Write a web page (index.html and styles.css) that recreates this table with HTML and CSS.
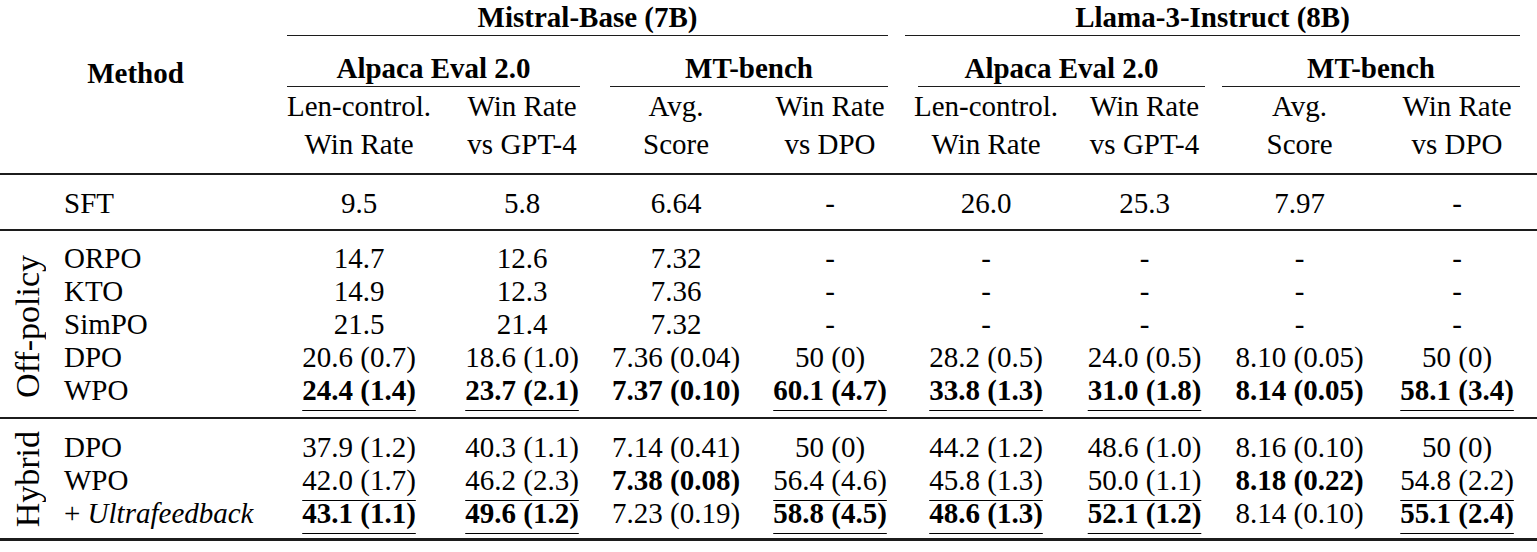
FILE: index.html
```html
<!DOCTYPE html>
<html lang="en">
<head>
<meta charset="utf-8">
<title>Results table</title>
<link rel="stylesheet" href="styles.css">
</head>
<body>
<table class="results">
  <colgroup>
    <col class="w-group">
    <col class="w-method">
    <col class="w-len">
    <col class="w-gpt">
    <col class="w-avg">
    <col class="w-dpo">
    <col class="w-len2">
    <col class="w-gpt2">
    <col class="w-avg2">
    <col class="w-dpo2">
  </colgroup>
  <thead>
    <tr class="row-model">
      <th class="method-head" colspan="2" rowspan="3"><div class="method-title">Method</div></th>
      <th colspan="4"><div class="span-rule rule-mistral">Mistral-Base (7B)</div></th>
      <th colspan="4"><div class="span-rule rule-llama">Llama-3-Instruct (8B)</div></th>
    </tr>
    <tr class="row-bench">
      <th colspan="2"><div class="span-rule bench rule-alpaca1">Alpaca Eval 2.0</div></th>
      <th colspan="2"><div class="span-rule bench rule-mt1">MT-bench</div></th>
      <th colspan="2"><div class="span-rule bench rule-alpaca2">Alpaca Eval 2.0</div></th>
      <th colspan="2"><div class="span-rule bench rule-mt2">MT-bench</div></th>
    </tr>
    <tr class="row-metric">
      <th class="metric">Len-control.<br>Win Rate</th>
      <th class="metric">Win Rate<br>vs GPT-4</th>
      <th class="metric">Avg.<br>Score</th>
      <th class="metric">Win Rate<br>vs DPO</th>
      <th class="metric">Len-control.<br>Win Rate</th>
      <th class="metric">Win Rate<br>vs GPT-4</th>
      <th class="metric">Avg.<br>Score</th>
      <th class="metric">Win Rate<br>vs DPO</th>
    </tr>
  </thead>
  <tbody class="block block-sft">
    <tr>
      <td class="group-label"></td>
      <td class="method">SFT</td>
      <td>9.5</td><td>5.8</td><td>6.64</td><td>-</td>
      <td>26.0</td><td>25.3</td><td>7.97</td><td>-</td>
    </tr>
  </tbody>
  <tbody class="block block-off">
    <tr>
      <td class="group-label" rowspan="5"><span class="rot">Off-policy</span></td>
      <td class="method">ORPO</td>
      <td>14.7</td><td>12.6</td><td>7.32</td><td>-</td>
      <td>-</td><td>-</td><td>-</td><td>-</td>
    </tr>
    <tr>
      <td class="method">KTO</td>
      <td>14.9</td><td>12.3</td><td>7.36</td><td>-</td>
      <td>-</td><td>-</td><td>-</td><td>-</td>
    </tr>
    <tr>
      <td class="method">SimPO</td>
      <td>21.5</td><td>21.4</td><td>7.32</td><td>-</td>
      <td>-</td><td>-</td><td>-</td><td>-</td>
    </tr>
    <tr>
      <td class="method">DPO</td>
      <td>20.6 (0.7)</td><td>18.6 (1.0)</td><td>7.36 (0.04)</td><td>50 (0)</td>
      <td>28.2 (0.5)</td><td>24.0 (0.5)</td><td>8.10 (0.05)</td><td>50 (0)</td>
    </tr>
    <tr>
      <td class="method">WPO</td>
      <td><span class="best ul">24.4 (1.4)</span></td>
      <td><span class="best ul">23.7 (2.1)</span></td>
      <td><span class="best">7.37 (0.10)</span></td>
      <td><span class="best ul">60.1 (4.7)</span></td>
      <td><span class="best ul">33.8 (1.3)</span></td>
      <td><span class="best ul">31.0 (1.8)</span></td>
      <td><span class="best">8.14 (0.05)</span></td>
      <td><span class="best ul">58.1 (3.4)</span></td>
    </tr>
  </tbody>
  <tbody class="block block-hybrid">
    <tr>
      <td class="group-label" rowspan="3"><span class="rot">Hybrid</span></td>
      <td class="method">DPO</td>
      <td>37.9 (1.2)</td><td>40.3 (1.1)</td><td>7.14 (0.41)</td><td>50 (0)</td>
      <td>44.2 (1.2)</td><td>48.6 (1.0)</td><td>8.16 (0.10)</td><td>50 (0)</td>
    </tr>
    <tr>
      <td class="method">WPO</td>
      <td><span class="ul">42.0 (1.7)</span></td>
      <td><span class="ul">46.2 (2.3)</span></td>
      <td><span class="best">7.38 (0.08)</span></td>
      <td><span class="ul">56.4 (4.6)</span></td>
      <td><span class="ul">45.8 (1.3)</span></td>
      <td><span class="ul">50.0 (1.1)</span></td>
      <td><span class="best">8.18 (0.22)</span></td>
      <td><span class="ul">54.8 (2.2)</span></td>
    </tr>
    <tr>
      <td class="method">+ <em>Ultrafeedback</em></td>
      <td><span class="best ul">43.1 (1.1)</span></td>
      <td><span class="best ul">49.6 (1.2)</span></td>
      <td>7.23 (0.19)</td>
      <td><span class="best ul">58.8 (4.5)</span></td>
      <td><span class="best ul">48.6 (1.3)</span></td>
      <td><span class="best ul">52.1 (1.2)</span></td>
      <td>8.14 (0.10)</td>
      <td><span class="best ul">55.1 (2.4)</span></td>
    </tr>
  </tbody>
</table>
</body>
</html>
```

FILE: styles.css
```css
html, body {
  margin: 0;
  padding: 0;
  background: #ffffff;
}

body {
  font-family: "Liberation Serif", "Times New Roman", Times, serif;
  font-size: 29px;
  color: #000000;
}

.results {
  border-collapse: separate;
  border-spacing: 0;
  table-layout: fixed;
  width: 1537px;
  line-height: 33px;
}

.w-group { width: 48px; }
.w-method { width: 223px; }
.w-len { width: 176px; }
.w-gpt { width: 150px; }
.w-avg { width: 158px; }
.w-dpo { width: 150px; }
.w-len2 { width: 162px; }
.w-gpt2 { width: 155px; }
.w-avg2 { width: 155px; }
.w-dpo2 { width: 160px; }

.results th,
.results td {
  padding: 0;
  text-align: center;
  vertical-align: top;
  white-space: nowrap;
}

.results th {
  font-weight: bold;
}

/* header */
.results th.method-head {
  padding-top: 56px;
}

.method-title {
  line-height: 35px;
}

.span-rule {
  line-height: 35px;
  border-bottom: 1px solid #1c1c1c;
}

.span-rule.bench {
  padding-top: 15px;
}

.rule-mistral { margin: 0 17px 0 16px; }
.rule-llama { margin: 0 17px 0 0; }
.rule-alpaca1 { margin: 0 17px 0 16px; }
.rule-mt1 { margin: 0 17px 0 13px; }
.rule-alpaca2 { margin: 0 17px 0 13px; }
.rule-mt2 { margin: 0 17px 0 0; }

.results th.metric {
  font-weight: normal;
  line-height: 38px;
  padding-bottom: 10px;
}

/* body blocks */
.block tr:first-child > td {
  border-top: 2px solid #1c1c1c;
}

.block-sft td {
  padding-top: 12px;
  padding-bottom: 9px;
}

.block-off tr:first-child > td {
  padding-top: 11px;
}

.block-off tr:last-child > td {
  padding-bottom: 10px;
}

.block-hybrid tr:first-child > td {
  padding-top: 12px;
}

.block-hybrid tr:last-child > td {
  padding-bottom: 8px;
  border-bottom: 3px solid #1c1c1c;
}

.results .block td.group-label {
  vertical-align: middle;
  text-align: center;
  padding: 0 0 0 8px;
}

.results .block-off td.group-label {
  padding-top: 12px;
}

.results .block-hybrid td.group-label {
  padding-top: 8px;
  border-bottom: 3px solid #1c1c1c;
}

.rot {
  display: inline-block;
  writing-mode: vertical-rl;
  transform: rotate(180deg);
  font-size: 34px;
  line-height: 32px;
}

.results td.method {
  text-align: left;
  padding-left: 16px;
}

.best {
  font-weight: bold;
}

.ul {
  text-decoration: underline;
  text-decoration-thickness: 1px;
  text-underline-offset: 10px;
}
```
